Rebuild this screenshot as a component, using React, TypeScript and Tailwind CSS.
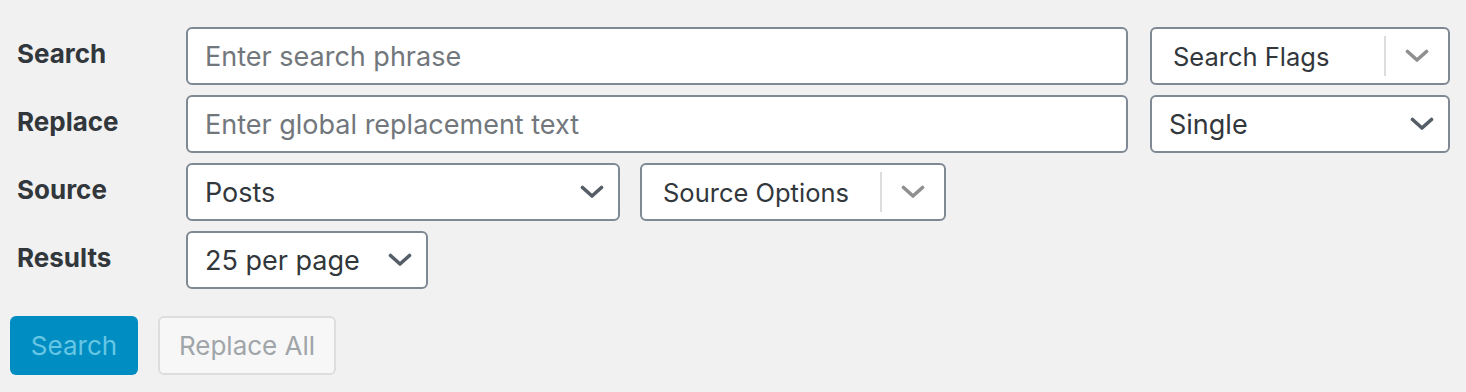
import React from "react";

const Chevron = ({ className = "" }: { className?: string }) => (
  <svg width="24" height="14" viewBox="0 0 24 14" className={className} fill="none">
    <path d="M2.5 2.5 L12 11 L21.5 2.5" stroke="currentColor" strokeWidth="3.6" strokeLinecap="round" strokeLinejoin="round" />
  </svg>
);

const TextInput = ({ placeholder }: { placeholder: string }) => (
  <div className="w-[942px] h-[58px] bg-white border-2 border-[#7e8993] rounded-[6px] flex items-center px-[17px] pt-[2px]">
    <span className="text-[27px] text-[#72777c]">{placeholder}</span>
  </div>
);

const Select = ({ label, width }: { label: string; width: string }) => (
  <div className={`${width} h-[58px] bg-white border-2 border-[#7e8993] rounded-[6px] flex items-center justify-between pl-[17px] pr-[14px]`}>
    <span className="text-[27px] text-[#32373c] pt-[2px]">{label}</span>
    <Chevron className="text-[#555d66]" />
  </div>
);

const MultiSelect = ({ label, width }: { label: string; width: string }) => (
  <div className={`${width} h-[58px] bg-white border-2 border-[#7e8993] rounded-[6px] flex items-center`}>
    <span className="flex-1 pl-[21px] pt-[2px] text-[25.5px] text-[#32373c]">{label}</span>
    <div className="w-[2px] h-[40px] bg-[#dddddd]" />
    <div className="w-[62px] flex items-center justify-center">
      <Chevron className="text-[#8f8f8f]" />
    </div>
  </div>
);

const Row = ({ label, gap = "gap-[22px]", children }: { label: string; gap?: string; children: React.ReactNode }) => (
  <div className="flex items-center">
    <div className="w-[176px] pl-[7px] -mt-[6px] text-[26px] font-bold text-[#32373c]">{label}</div>
    <div className={`flex items-center ${gap}`}>{children}</div>
  </div>
);

export default function App() {
  return (
    <div
      className="w-[1466px] h-[392px] bg-[#f1f1f1] pt-[27px] px-[10px]"
      style={{ fontFamily: "Inter, 'Noto Sans', sans-serif" }}
    >
      <div className="flex flex-col gap-[10px]">
        <Row label="Search">
          <TextInput placeholder="Enter search phrase" />
          <MultiSelect label="Search Flags" width="w-[300px]" />
        </Row>
        <Row label="Replace">
          <TextInput placeholder="Enter global replacement text" />
          <Select label="Single" width="w-[300px]" />
        </Row>
        <Row label="Source" gap="gap-[20px]">
          <Select label="Posts" width="w-[434px]" />
          <MultiSelect label="Source Options" width="w-[306px]" />
        </Row>
        <Row label="Results">
          <Select label="25 per page" width="w-[242px]" />
        </Row>
      </div>
      <div className="flex gap-[20px] mt-[27px]">
        <div className="w-[128px] h-[59px] rounded-[6px] bg-[#008ec2] flex items-center justify-center text-[26px] text-[#66c6e4]">
          Search
        </div>
        <div className="w-[178px] h-[59px] rounded-[6px] bg-[#f7f7f7] border-2 border-[#dddddd] flex items-center justify-center text-[26px] text-[#a0a5aa]">
          Replace All
        </div>
      </div>
    </div>
  );
}
